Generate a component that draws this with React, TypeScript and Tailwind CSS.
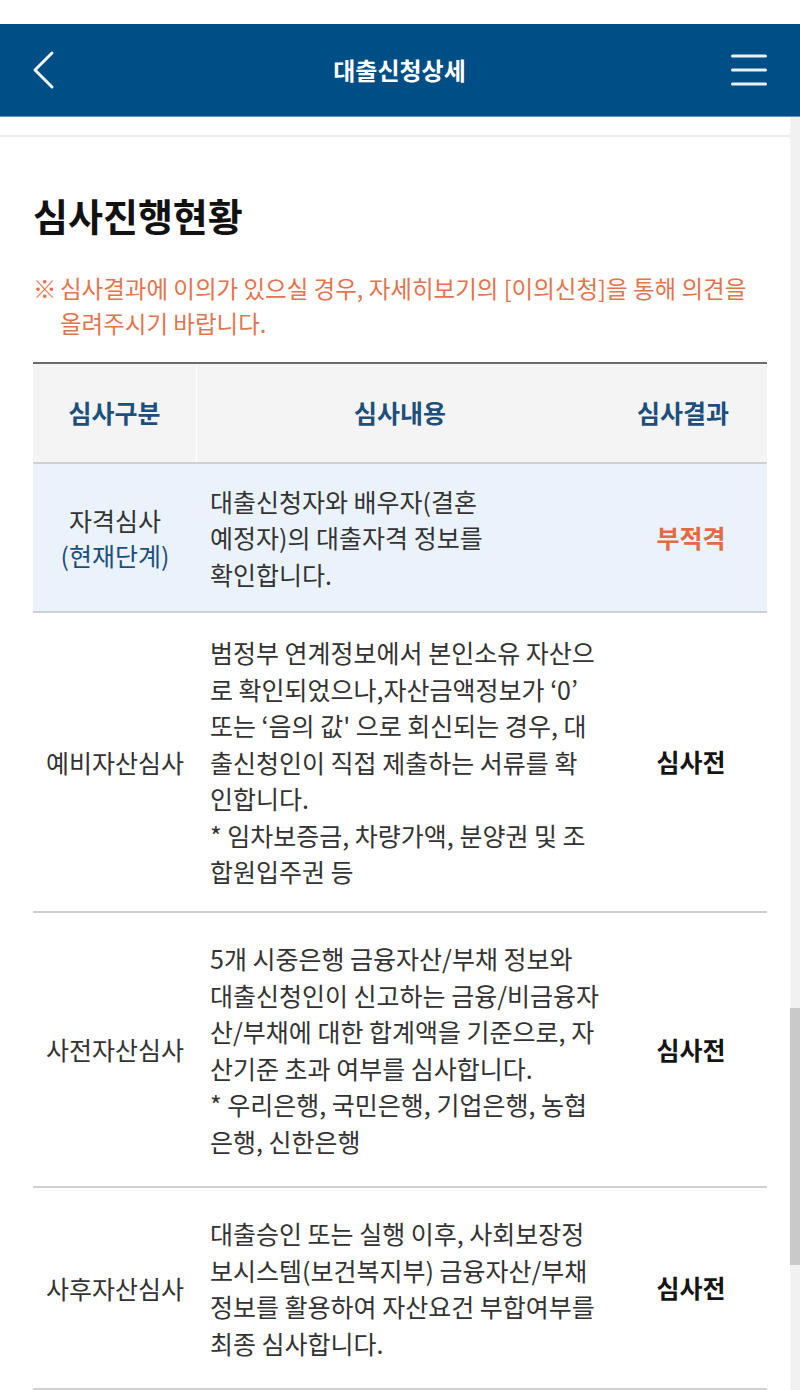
import React from "react";

const font = { fontFamily: '"Noto Sans CJK KR", "Noto Sans", sans-serif' };

type Row = {
  name: string[];
  current?: boolean;
  lines: string[];
  result: string;
  height: string;
};

const rows: Row[] = [
  {
    name: ["자격심사"],
    current: true,
    lines: ["대출신청자와 배우자(결혼", "예정자)의 대출자격 정보를", "확인합니다."],
    result: "부적격",
    height: "h-[149px]",
  },
  {
    name: ["예비자산심사"],
    lines: [
      "범정부 연계정보에서 본인소유 자산으",
      "로 확인되었으나,자산금액정보가 ‘0’",
      "또는 ‘음의 값' 으로 회신되는 경우, 대",
      "출신청인이 직접 제출하는 서류를 확",
      "인합니다.",
      "* 임차보증금, 차량가액, 분양권 및 조",
      "합원입주권 등",
    ],
    result: "심사전",
    height: "h-[300px]",
  },
  {
    name: ["사전자산심사"],
    lines: [
      "5개 시중은행 금융자산/부채 정보와",
      "대출신청인이 신고하는 금융/비금융자",
      "산/부채에 대한 합계액을 기준으로, 자",
      "산기준 초과 여부를 심사합니다.",
      "* 우리은행, 국민은행, 기업은행, 농협",
      "은행, 신한은행",
    ],
    result: "심사전",
    height: "h-[275px]",
  },
  {
    name: ["사후자산심사"],
    lines: [
      "대출승인 또는 실행 이후, 사회보장정",
      "보시스템(보건복지부) 금융자산/부채",
      "정보를 활용하여 자산요건 부합여부를",
      "최종 심사합니다.",
    ],
    result: "심사전",
    height: "h-[202px]",
  },
];

function Header() {
  return (
    <header className="grid h-[93px] grid-cols-[1fr_auto_1fr] items-center border-b border-[#5f93c0] bg-[#004e86] pl-[32px] pr-[33px]">
      <svg width="24" height="40" viewBox="0 0 24 40" fill="none">
        <path d="M20 3 L3 20 L20 37" stroke="#f2f6fa" strokeWidth="3" strokeLinecap="round" strokeLinejoin="round" />
      </svg>
      <h1 className="text-[24px] font-bold text-white">대출신청상세</h1>
      <svg className="justify-self-end" width="36" height="32" viewBox="0 0 36 32" fill="none">
        <path d="M1.5 2 H34.5 M1.5 16 H34.5 M1.5 30 H34.5" stroke="#e9f0f7" strokeWidth="3" strokeLinecap="round" />
      </svg>
    </header>
  );
}

function Table() {
  return (
    <div className="border-t-2 border-[#6b6b6b]">
      <div className="grid h-[100px] grid-cols-[164px_418px_1fr] items-center border-b-2 border-[#d0d0d0] bg-[#f4f4f4] text-[25px] font-bold text-[#1d4f7c]">
        <div className="flex h-full items-center justify-center border-r border-white">심사구분</div>
        <div className="pr-[12px] text-center">심사내용</div>
        <div className="pr-[16px] text-center">심사결과</div>
      </div>
      {rows.map((row) => (
        <div
          key={row.name[0]}
          className={`grid ${row.height} grid-cols-[164px_418px_1fr] items-center border-b-2 border-[#d0d0d0] text-[25px] text-[#333] ${
            row.current ? "bg-[#eaf2fb]" : "bg-white"
          }`}
        >
          <div className="text-center leading-[35px]">
            {row.name.map((n) => (
              <div key={n}>{n}</div>
            ))}
            {row.current && <div className="text-[#1d4f7c]">(현재단계)</div>}
          </div>
          <div className="pl-[13px] leading-[36.5px]">
            {row.lines.map((l) => (
              <div key={l} className="whitespace-nowrap">
                {l}
              </div>
            ))}
          </div>
          <div
            className={`text-center font-bold ${
              row.current ? "text-[#e06c43]" : "text-[#151515]"
            }`}
          >
            {row.result}
          </div>
        </div>
      ))}
    </div>
  );
}

export default function App() {
  return (
    <div className="min-h-[1390px] bg-white" style={font}>
      <div className="h-[24px]" />
      <Header />
      <div className="flex">
        <main className="flex-1">
          <div className="h-[18px]" />
          <div className="h-[2px] bg-[#ececec]" />
          <div className="pl-[33px] pr-[23px] pt-[55px]">
            <h2 className="text-[38px] font-bold leading-[46px] text-[#111]">심사진행현황</h2>
            <div className="mt-[33px] flex text-[23.5px] leading-[35px] text-[#e3744e]">
              <span className="w-[27px] shrink-0">※</span>
              <p>
                <span className="whitespace-nowrap">심사결과에 이의가 있으실 경우, 자세히보기의 [이의신청]을 통해 의견을</span>
                <br />
                올려주시기 바랍니다.
              </p>
            </div>
            <div className="mt-[21px]">
              <Table />
            </div>
          </div>
        </main>
        <aside className="relative w-[10px] shrink-0 bg-[#f1f1f1]">
          <div className="absolute left-0 top-[891px] h-[257px] w-[10px] bg-[#c9c9c9]" />
        </aside>
      </div>
    </div>
  );
}
